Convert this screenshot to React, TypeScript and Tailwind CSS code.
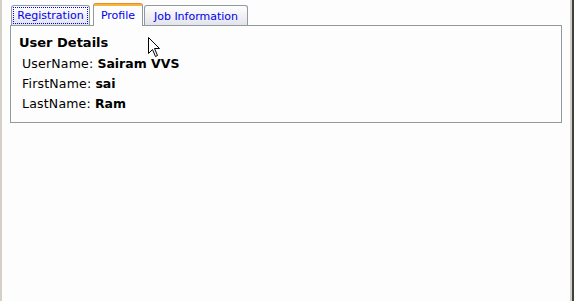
import React from 'react';

const font = { fontFamily: '"DejaVu Sans", Verdana, sans-serif' };

function Cursor() {
  return (
    <svg className="absolute left-[148px] top-[37px]" width="13" height="21" viewBox="0 0 13 21">
      <path
        d="M0.5 0.5 L0.5 16.5 L4.5 12.5 L7.5 19.5 L9.5 18.5 L6.5 11.5 L11.5 11.5 Z"
        fill="#fff"
        stroke="#000"
        strokeWidth="1"
        strokeLinejoin="miter"
      />
    </svg>
  );
}

export default function App() {
  const rows = [
    { label: 'UserName:', value: 'Sairam VVS' },
    { label: 'FirstName:', value: 'sai' },
    { label: 'LastName:', value: 'Ram' },
  ];

  return (
    <div className="relative w-[574px] h-[301px] flex bg-[#fdfdfd]" style={font}>
      <div className="w-[2px] bg-[#d4d0c8]" />
      <div className="flex-1 flex flex-col pt-[3px] pl-[8px] pr-[8px]">
        {/* tabs */}
        <div className="flex items-end h-[22px] pl-[1px] relative z-10">
          <div className="h-[20px] w-[79px] border border-b-0 border-[#919b9c] rounded-t-[3px] bg-gradient-to-b from-white to-[#e3e3ec] p-[1px]">
            <div className="h-full border border-dotted border-[#0000ff] flex items-center justify-center text-[11px] text-[#0000ee] pt-[2px]">
              Registration
            </div>
          </div>
          <div className="ml-[3px] h-[23px] w-[50px] border-x border-[#919b9c] rounded-t-[3px] bg-[#fdfdfd] mb-[-1px] flex flex-col">
            <div className="h-[3px] bg-[#f4b53f] rounded-t-[2px] border-t border-[#e68b2c]" />
            <div className="flex-1 flex items-center justify-center text-[11px] text-[#0000ee] pt-[1px]">Profile</div>
          </div>
          <div className="ml-[1px] h-[20px] w-[104px] border border-b-0 border-[#919b9c] rounded-t-[3px] bg-gradient-to-b from-white to-[#e3e3ec] flex items-center justify-center text-[11px] text-[#0000ee] pt-[3px]">
            Job Information
          </div>
        </div>
        {/* panel */}
        <div className="h-[98px] border border-[#919b9c] bg-[#fdfdfd] pl-[8px] pt-[9px]">
          <div className="text-[13px] font-bold text-black leading-[16px]">User Details</div>
          <div className="pl-[3px] pt-[3px] flex flex-col">
            {rows.map(r => (
              <div key={r.label} className="h-[20px] flex items-center text-[12.5px] text-black">
                <span className="tracking-[0.2px]">{r.label}</span>
                <span className="ml-[4px] font-bold">{r.value}</span>
              </div>
            ))}
          </div>
        </div>
      </div>
      <div className="w-[2px] bg-[#d4d0c8]" />
      <div className="w-[2px] bg-[#404040]" />
      <Cursor />
    </div>
  );
}
